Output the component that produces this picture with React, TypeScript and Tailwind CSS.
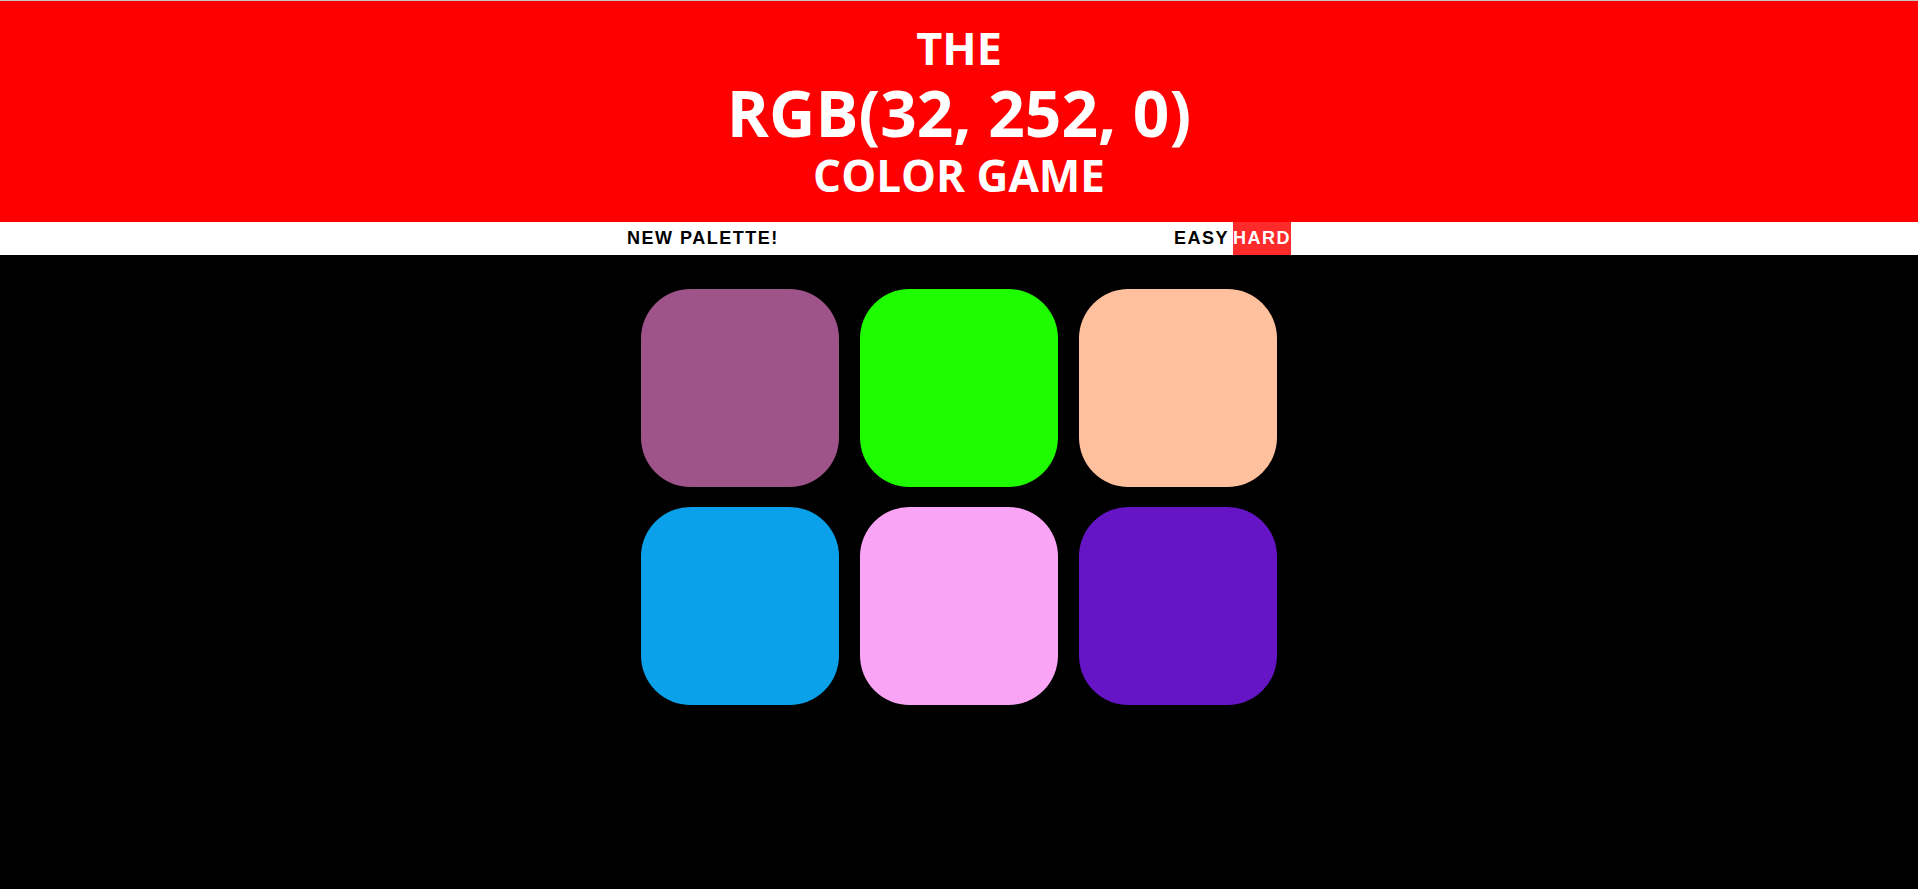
import { useState } from "react";

const palette = [
  "rgb(158, 84, 137)",
  "rgb(32, 252, 0)",
  "rgb(255, 192, 158)",
  "rgb(11, 160, 234)",
  "rgb(250, 164, 245)",
  "rgb(101, 20, 198)",
];

export default function App() {
  const [mode, setMode] = useState<"easy" | "hard">("hard");
  const target = palette[1];

  return (
    <div className="min-h-screen bg-black border-t border-[#c4c4c4]">
      {/* title banner */}
      <h1 className="bg-[#ff0000] text-white text-center uppercase font-bold pt-[22px] pb-[23px] font-['Open_Sans',sans-serif]">
        <span className="block text-[45px] leading-[50px]">The</span>
        <span className="block text-[64px] leading-[79px]">{target}</span>
        <span className="block text-[44px] leading-[47px]">Color Game</span>
      </h1>

      {/* controls stripe */}
      <div className="bg-white h-[33px] flex justify-center whitespace-nowrap font-['Liberation_Sans',Arial,sans-serif] font-bold text-[18px] tracking-[1.5px]">
        <button className="w-[156px] text-left text-black uppercase">New Palette!</button>
        <span className="w-[391px]" />
        <button
          onClick={() => setMode("easy")}
          className={mode === "easy" ? "w-[52px] bg-[#ff2a2a] text-white uppercase" : "w-[52px] text-black text-left uppercase"}
        >
          Easy
        </button>
        <span className="w-[7px]" />
        <button
          onClick={() => setMode("hard")}
          className={mode === "hard" ? "w-[58px] bg-[#ff2a2a] text-white uppercase" : "w-[58px] text-black uppercase"}
        >
          Hard
        </button>
      </div>

      {/* color squares */}
      <div className="w-[636px] mx-auto mt-[34px] grid grid-cols-3 gap-x-[21px] gap-y-[20px]">
        {(mode === "hard" ? palette : palette.slice(0, 3)).map((c, i) => (
          <div key={i} className="h-[198px] rounded-[25%]" style={{ backgroundColor: c }} />
        ))}
      </div>
    </div>
  );
}
